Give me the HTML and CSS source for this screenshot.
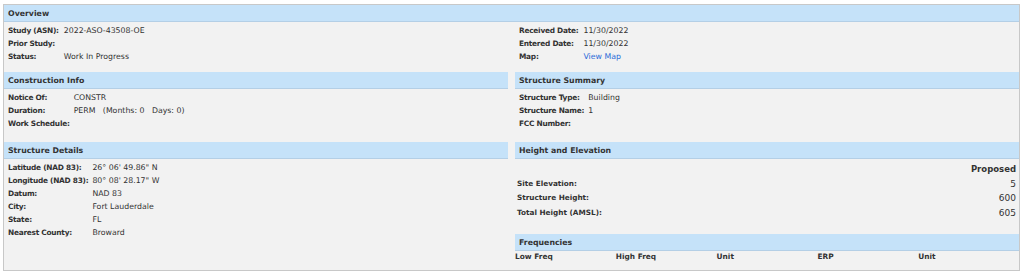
FILE: index.html
```html
<!DOCTYPE html>
<html lang="en">
<head>
  <meta charset="UTF-8" />
  <title>Study Details</title>
  <link rel="stylesheet" href="styles.css">
</head>
<body>

<div class="panel">
  <div class="head">Overview</div>
  <div class="cols overview">
    <table class="info">
      <tr><th>Study (ASN):</th><td>2022-ASO-43508-OE</td></tr>
      <tr><th>Prior Study:</th><td></td></tr>
      <tr><th>Status:</th><td>Work In Progress</td></tr>
    </table>
    <table class="info">
      <tr><th>Received Date:</th><td>11/30/2022</td></tr>
      <tr><th>Entered Date:</th><td>11/30/2022</td></tr>
      <tr><th>Map:</th><td><a href="#">View Map</a></td></tr>
    </table>
  </div>

  <div class="cols section construction">
    <div>
      <div class="head">Construction Info</div>
      <table class="info">
        <tr><th>Notice Of:</th><td>CONSTR</td></tr>
        <tr><th>Duration:</th><td>PERM &nbsp;&nbsp;(Months: 0 &nbsp;&nbsp;Days: 0)</td></tr>
        <tr><th>Work Schedule:</th><td></td></tr>
      </table>
    </div>
    <div>
      <div class="head">Structure Summary</div>
      <table class="info">
        <tr><th>Structure Type:</th><td>Building</td></tr>
        <tr><th>Structure Name:</th><td>1</td></tr>
        <tr><th>FCC Number:</th><td></td></tr>
      </table>
    </div>
  </div>

  <div class="cols section details">
    <div>
      <div class="head">Structure Details</div>
      <table class="info">
        <tr><th>Latitude (NAD 83):</th><td>26° 06' 49.86" N</td></tr>
        <tr><th>Longitude (NAD 83):</th><td>80° 08' 28.17" W</td></tr>
        <tr><th>Datum:</th><td>NAD 83</td></tr>
        <tr><th>City:</th><td>Fort Lauderdale</td></tr>
        <tr><th>State:</th><td>FL</td></tr>
        <tr><th>Nearest County:</th><td>Broward</td></tr>
      </table>
    </div>
    <div>
      <div class="head">Height and Elevation</div>
      <table class="heights">
        <tr><th></th><th class="num proposed">Proposed</th></tr>
        <tr><th>Site Elevation:</th><td class="num">5</td></tr>
        <tr><th>Structure Height:</th><td class="num">600</td></tr>
        <tr><th>Total Height (AMSL):</th><td class="num">605</td></tr>
      </table>
      <div class="head freq-head">Frequencies</div>
      <table class="freq">
        <tr><th>Low Freq</th><th>High Freq</th><th>Unit</th><th>ERP</th><th>Unit</th></tr>
      </table>
    </div>
  </div>
</div>

</body>
</html>
```

FILE: styles.css
```css
body {
  margin: 0;
  font-family: 'DejaVu Sans', Verdana, sans-serif;
  font-size: 7.8px;
  color: #333;
  background: #fff;
}

.panel {
  margin: 4px 4px 0 3px;
  height: 265px;
  border: 1px solid #c8c8c8;
  background: #f2f2f2;
}

.head {
  height: 17px;
  line-height: 17px;
  padding-left: 4px;
  background: #c5e2f9;
  border-bottom: 1px solid #b4cfe6;
  font-size: 7.8px;
  font-weight: bold;
  color: #333;
  box-sizing: border-box;
}

.cols {
  display: grid;
  grid-template-columns: 504px 504px;
  column-gap: 7px;
  align-items: start;
}

.cols > .info {
  justify-self: start;
}

.overview {
  height: 50px;
}

.construction {
  height: 70px;
}

table {
  border-collapse: collapse;
}

.info {
  margin: 2px 0 0 4px;
}

.info th,
.info td {
  height: 13px;
  line-height: 13px;
  padding: 0;
  text-align: left;
  vertical-align: middle;
  white-space: nowrap;
}

.info th {
  font-size: 7.4px;
  font-weight: bold;
  letter-spacing: -0.25px;
  padding-right: 4px;
}

.overview .info th {
  padding-right: 5px;
}

a {
  color: #2a6bd8;
  text-decoration: none;
}

.heights {
  width: 100%;
  margin-top: 3px;
}

.heights th,
.heights td {
  height: 14.5px;
  line-height: 14px;
  padding: 0 3px 0 2px;
  text-align: left;
  font-size: 7.3px;
  font-weight: bold;
}

.heights td {
  font-weight: normal;
  font-size: 9px;
}

.heights .num {
  text-align: right;
}

.heights .proposed {
  font-size: 8.5px;
}

.freq-head {
  margin-top: 14px;
}

.freq {
  width: 100%;
  table-layout: fixed;
}

.freq th {
  text-align: left;
  font-size: 7.4px;
  font-weight: bold;
  padding: 0;
  height: 12px;
  line-height: 12px;
}
```
